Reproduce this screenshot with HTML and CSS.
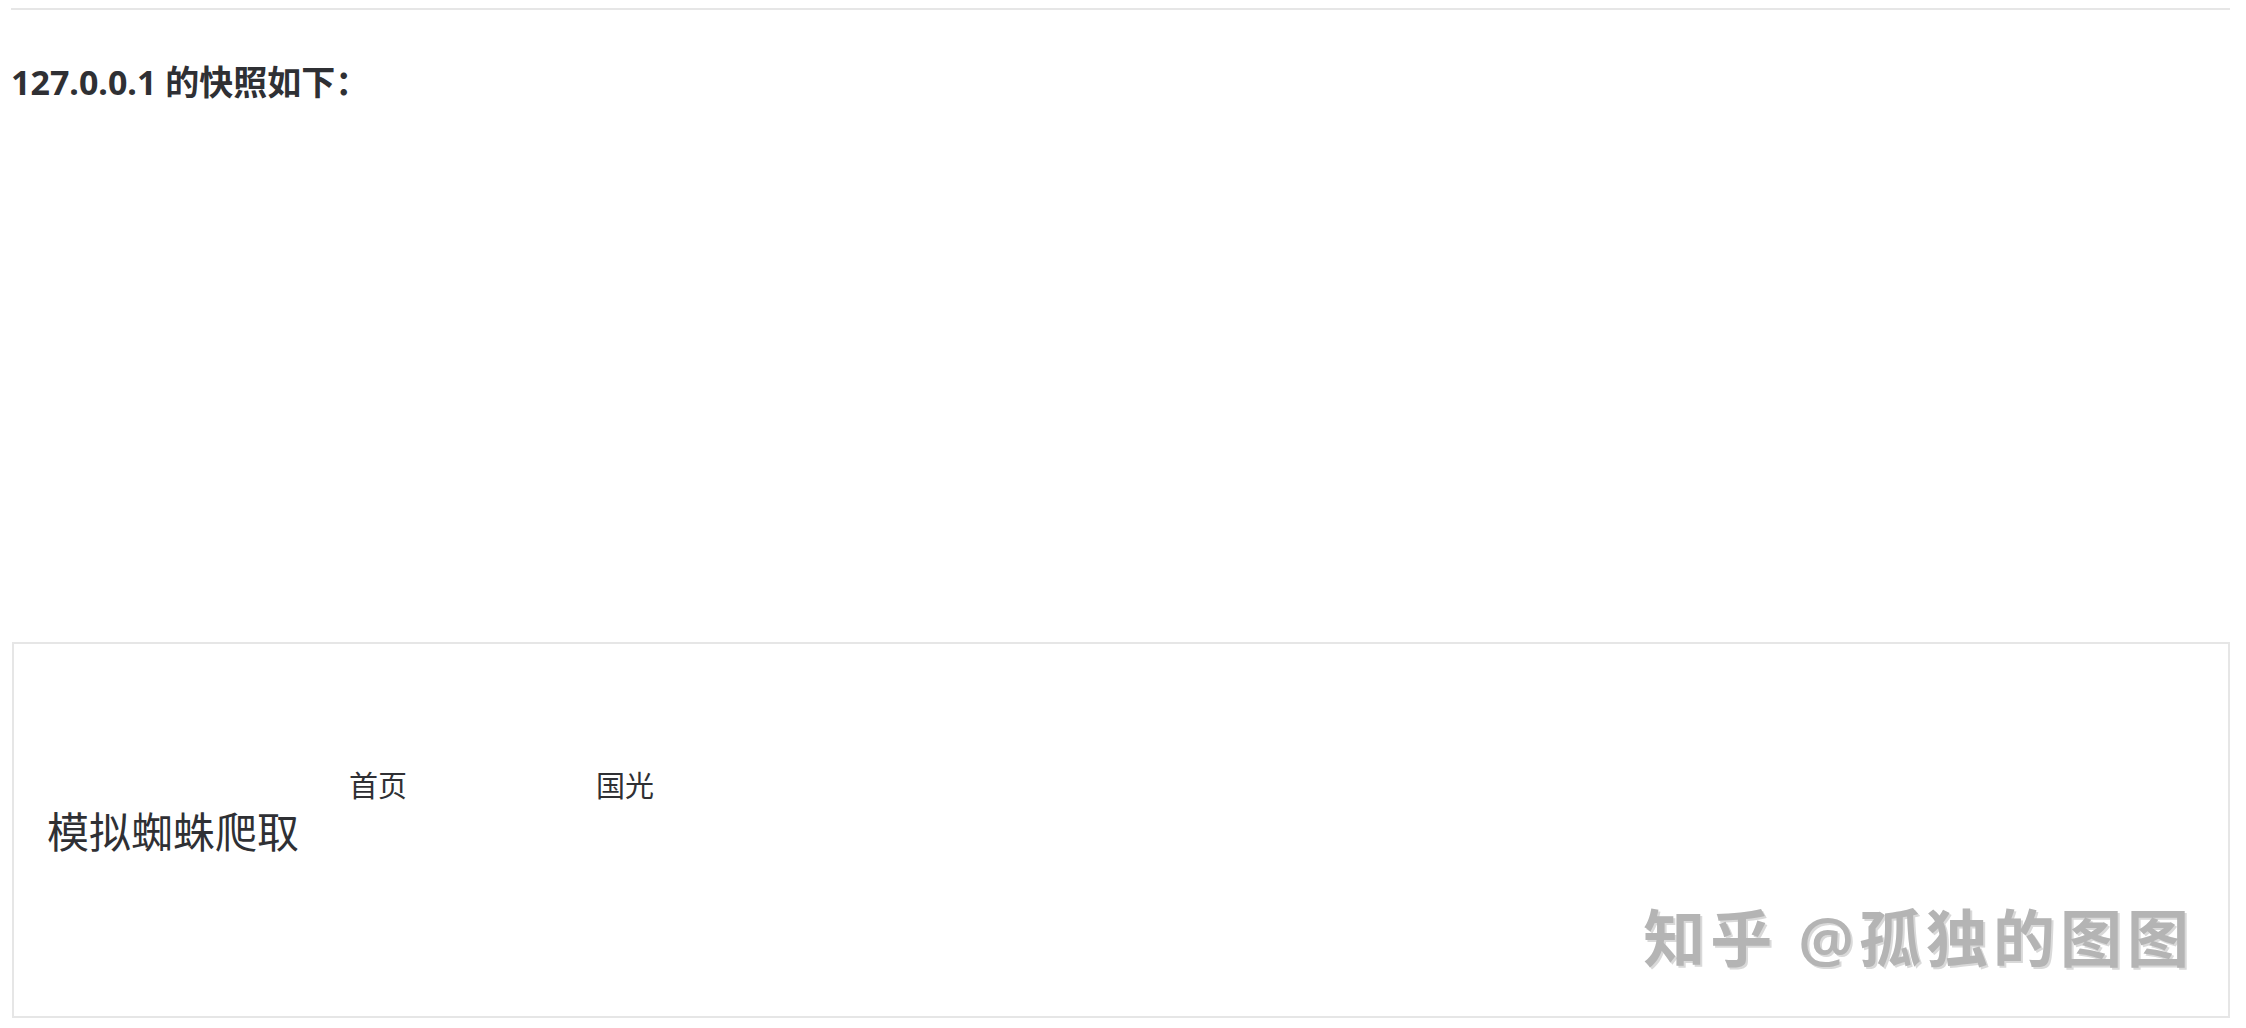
FILE: index.html
```html
<!DOCTYPE html>
<html lang="zh-CN">
<head>
    <meta charset="UTF-8">
    <title>127.0.0.1 的快照</title>
    <link rel="stylesheet" href="styles.css">
</head>
<body>
<div class="topLine"></div>
<h2 class="snapTitle">127.0.0.1 的快照如下：</h2>

<div class="snapBox">
    <div class="siteHeader">
        <div class="brand">模拟蜘蛛爬取</div>
        <ul class="nav">
            <li><a href="#">首页</a></li>
            <li><a href="#">国光</a></li>
        </ul>
    </div>
    <div class="watermark">知乎 @孤独的图图</div>
</div>
</body>
</html>
```

FILE: styles.css
```css
body {
    margin: 0;
    padding: 0;
    background-color: #FFF;
    color: #2f3034;
    font-family: "Noto Sans", "Noto Sans CJK SC", sans-serif;
}

.topLine {
    height: 2px;
    margin: 8px 16px 0 11px;
    background-color: #e6e6e6;
}

.snapTitle {
    margin: 50px 0 0 11px;
    font-size: 34px;
    font-weight: bold;
    line-height: 44px;
}

.snapBox {
    position: relative;
    box-sizing: border-box;
    height: 376px;
    margin: 538px 16px 0 12px;
    border: 2px solid #e6e6e6;
}

.siteHeader {
    display: flex;
    align-items: flex-start;
    padding: 124px 0 0 33px;
}

.brand {
    margin-top: 39px;
    font-size: 42px;
    line-height: 50px;
    width: 254px;
}

.nav {
    display: flex;
    margin: 0 0 0 48px;
    padding: 0;
    list-style: none;
}

.nav li {
    width: 247px;
    font-size: 29px;
    line-height: 36px;
}

.nav a {
    color: #2f3034;
    text-decoration: none;
}

.watermark {
    position: absolute;
    right: 34px;
    bottom: 42px;
    font-size: 62px;
    font-weight: 600;
    letter-spacing: 5px;
    line-height: 72px;
    color: #b4b4b4;
    text-shadow: 2px 2px 0 #d9d9d9;
}
```
